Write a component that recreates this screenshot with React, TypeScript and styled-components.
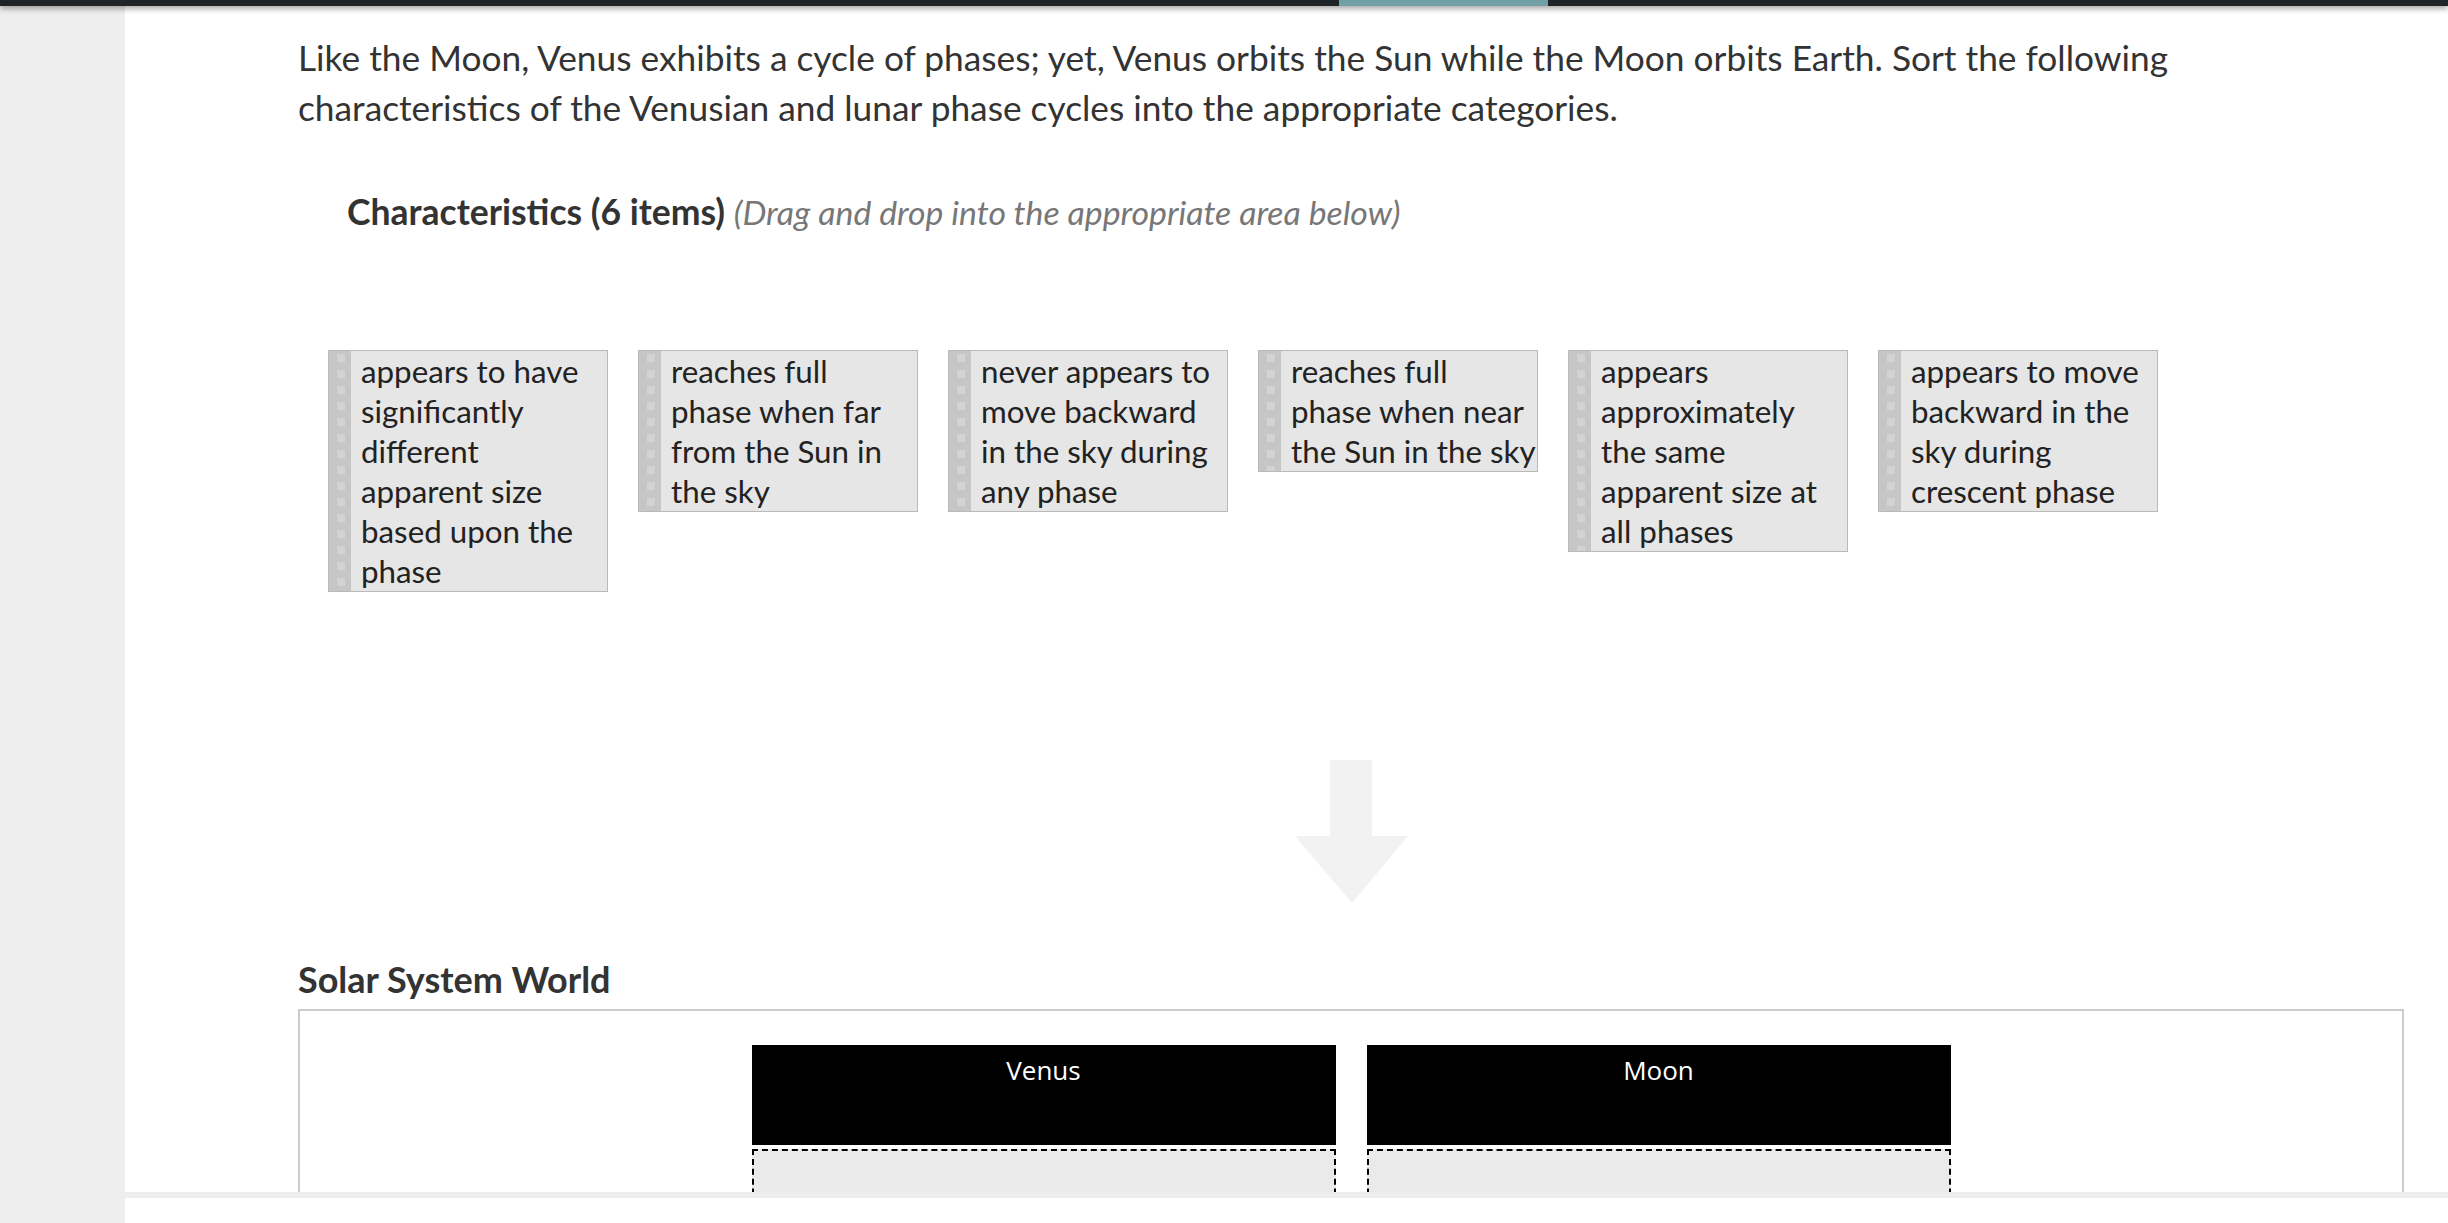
import styled, { createGlobalStyle } from "styled-components";

const GlobalStyle = createGlobalStyle`
  html, body {
    margin: 0;
    padding: 0;
    background: #eeeeee;
  }
  body {
    font-family: Lato, "Open Sans", sans-serif;
    color: #333;
  }
`;

const TopBar = styled.div`
  position: relative;
  z-index: 2;
  display: flex;
  height: 6px;
  background: #1f2429;
  box-shadow: 0 2px 6px rgba(0, 0, 0, 0.45);
`;

const TopSpacer = styled.div<{ $w: number }>`
  width: ${(p) => p.$w}px;
`;

const ActiveTab = styled.div`
  width: 209px;
  background: #72a0a5;
`;

const Shell = styled.div`
  display: flex;
`;

const Sidebar = styled.div`
  width: 125px;
  flex-shrink: 0;
`;

const Main = styled.div`
  flex: 1;
  display: flex;
  flex-direction: column;
  gap: 6px;
`;

const Panel = styled.div<{ $h: number }>`
  height: ${(p) => p.$h}px;
  background: #fff;
  overflow: hidden;
  box-sizing: border-box;
  padding: 27px 44px 0 173px;
`;

const Question = styled.p`
  margin: 0;
  max-width: 1960px;
  font-size: 35.3px;
  line-height: 50px;
  color: #333;
`;

const SectionTitle = styled.div`
  margin: 59px 0 0 49px;
  font-size: 35.5px;
  line-height: 40px;
  font-weight: 700;
  color: #333;
`;

const Hint = styled.span`
  font-weight: 400;
  font-style: italic;
  color: #777;
  font-size: 33.8px;
`;

const CardRow = styled.div`
  display: flex;
  align-items: flex-start;
  gap: 30px;
  margin: 118px 0 0 30px;
`;

const Card = styled.div`
  display: flex;
  width: 280px;
  box-sizing: border-box;
  border: 1px solid #b9b9b9;
  background: #e6e6e6;
`;

const Handle = styled.div`
  width: 22px;
  flex-shrink: 0;
  background-color: #c6c6c6;
  background-image: linear-gradient(
      90deg,
      #c6c6c6 8px,
      transparent 8px,
      transparent 16px,
      #c6c6c6 16px
    ),
    linear-gradient(#d3d3d3 8px, #c6c6c6 8px);
  background-size: 22px 16px;
  background-position: 0 3px;
`;

const CardText = styled.div`
  padding: 0 0 0 10px;
  font-size: 31.3px;
  line-height: 40px;
  color: #222;
`;

const CardLine = styled.span`
  display: block;
  white-space: nowrap;
`;

const ArrowWrap = styled.div`
  display: flex;
  justify-content: center;
  margin-top: 168px;
  height: 143px;
`;

const WorldTitle = styled.h2`
  margin: 55px 0 0;
  font-size: 36px;
  line-height: 42px;
  font-weight: 700;
  color: #333;
`;

const WorldBox = styled.div`
  margin-top: 9px;
  border: 2px solid #cccccc;
  padding-top: 34px;
  display: flex;
  justify-content: center;
  gap: 31px;
`;

const Column = styled.div`
  width: 584px;
  display: flex;
  flex-direction: column;
  gap: 4px;
`;

const ColumnHeader = styled.div`
  height: 100px;
  box-sizing: border-box;
  padding-top: 8px;
  background: #000;
  color: #fff;
  text-align: center;
  font-family: "Open Sans", "Noto Sans", sans-serif;
  font-size: 26px;
  line-height: 34px;
`;

const DropZone = styled.div`
  height: 200px;
  border: 2px dashed #000;
  background: #eaeaea;
`;

// each item keeps the line breaks it shows in the drag list
const characteristics = [
  ["appears to have", "significantly", "different", "apparent size", "based upon the", "phase"],
  ["reaches full", "phase when far", "from the Sun in", "the sky"],
  ["never appears to", "move backward", "in the sky during", "any phase"],
  ["reaches full", "phase when near", "the Sun in the sky"],
  ["appears", "approximately", "the same", "apparent size at", "all phases"],
  ["appears to move", "backward in the", "sky during", "crescent phase"],
];

const categories = ["Venus", "Moon"];

function DownArrow() {
  return (
    <svg width="113" height="143" viewBox="0 0 113 143">
      <polygon points="35,0 77,0 77,76 113,76 57,143 0,76 35,76" fill="#f2f2f2" />
    </svg>
  );
}

export default function App() {
  return (
    <>
      <GlobalStyle />
      <TopBar>
        <TopSpacer $w={1339} />
        <ActiveTab />
      </TopBar>
      <Shell>
        <Sidebar />
        <Main>
          <Panel $h={1186}>
            <Question>
              Like the Moon, Venus exhibits a cycle of phases; yet, Venus orbits
              the Sun while the Moon orbits Earth. Sort the following
              characteristics of the Venusian and lunar phase cycles into the
              appropriate categories.
            </Question>
            <SectionTitle>
              Characteristics (6 items){" "}
              <Hint>(Drag and drop into the appropriate area below)</Hint>
            </SectionTitle>
            <CardRow>
              {characteristics.map((lines, idx) => (
                <Card key={idx}>
                  <Handle />
                  <CardText>
                    {lines.map((line, i) => (
                      <CardLine key={i}>{line}</CardLine>
                    ))}
                  </CardText>
                </Card>
              ))}
            </CardRow>
            <ArrowWrap>
              <DownArrow />
            </ArrowWrap>
            <WorldTitle>Solar System World</WorldTitle>
            <WorldBox>
              {categories.map((name) => (
                <Column key={name}>
                  <ColumnHeader>{name}</ColumnHeader>
                  <DropZone />
                </Column>
              ))}
            </WorldBox>
          </Panel>
          <Panel $h={100} />
        </Main>
      </Shell>
    </>
  );
}
